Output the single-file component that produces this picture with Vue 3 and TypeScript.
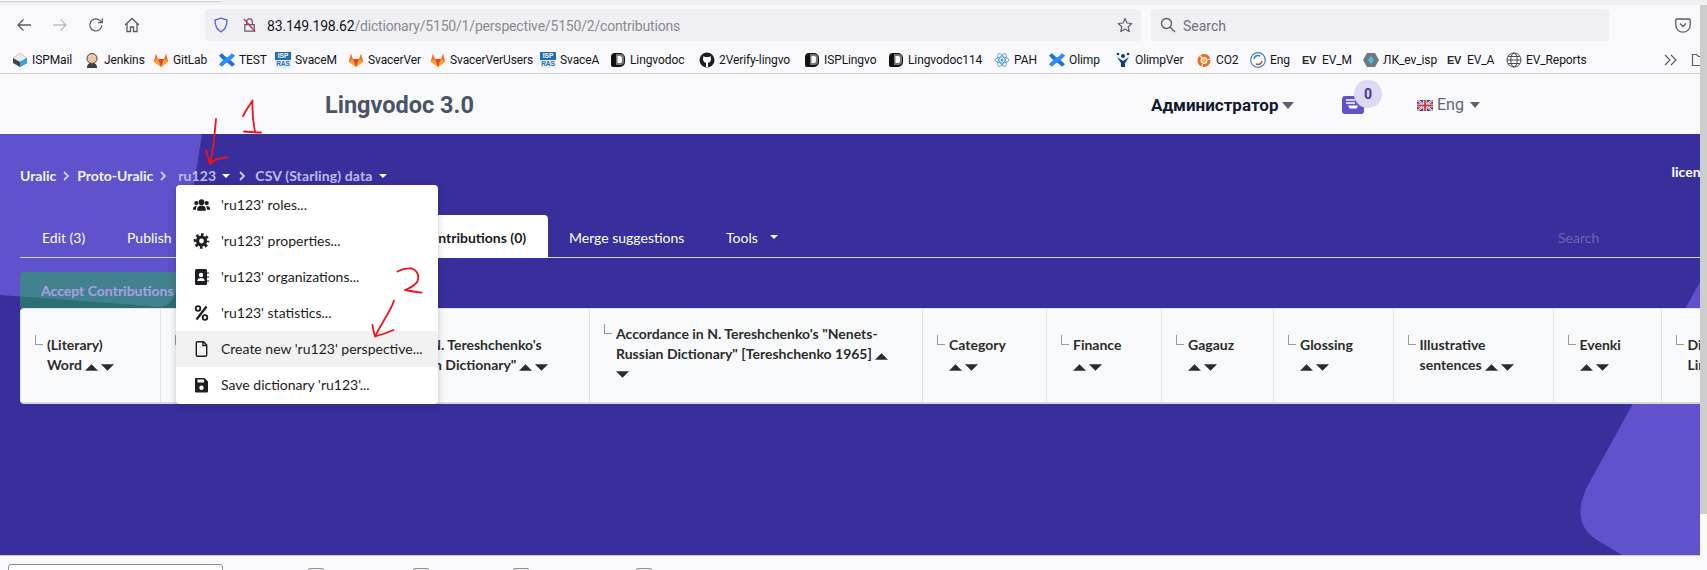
<script setup lang="ts">
type Mark = { label: string; kind: string; start: number }
const rawMarks: Mark[] = [
  { label: 'ISPMail', kind: 'mail', start: 12 },
  { label: 'Jenkins', kind: 'jenkins', start: 84 },
  { label: 'GitLab', kind: 'gitlab', start: 153 },
  { label: 'TEST', kind: 'conf', start: 219 },
  { label: 'SvaceM', kind: 'isp', start: 275 },
  { label: 'SvacerVer', kind: 'gitlab', start: 348 },
  { label: 'SvacerVerUsers', kind: 'gitlab', start: 430 },
  { label: 'SvaceA', kind: 'isp', start: 540 },
  { label: 'Lingvodoc', kind: 'd', start: 610 },
  { label: '2Verify-lingvo', kind: 'gh', start: 699 },
  { label: 'ISPLingvo', kind: 'd', start: 804 },
  { label: 'Lingvodoc114', kind: 'd', start: 888 },
  { label: 'РАН', kind: 'atom', start: 994 },
  { label: 'Olimp', kind: 'conf', start: 1049 },
  { label: 'OlimpVer', kind: 'person', start: 1115 },
  { label: 'CO2', kind: 'grafana', start: 1196 },
  { label: 'Eng', kind: 'eng', start: 1250 },
  { label: 'EV_M', kind: 'ev', start: 1302 },
  { label: 'ЛК_ev_isp', kind: 'lk', start: 1363 },
  { label: 'EV_A', kind: 'ev', start: 1447 },
  { label: 'EV_Reports', kind: 'globe', start: 1506 },
  { label: '', kind: 'chev', start: 1663 },
  { label: '', kind: 'folder', start: 1691 },
]
const marks = rawMarks.map((m, i) => ({
  ...m,
  width: (i + 1 < rawMarks.length ? rawMarks[i + 1].start : 1700) - m.start,
}))

type Col = { w: number; text: string; block?: boolean; tall?: boolean; split?: boolean; bare?: boolean }
const cols: Col[] = [
  { w: 140, text: '(Literary)\nWord' },
  { w: 152, text: '', bare: true },
  { w: 277, text: 'Accordance in N. Tereshchenko\'s\n"Nenets-Russian Dictionary"' },
  { w: 333, text: 'Accordance in N. Tereshchenko\'s "Nenets-\nRussian Dictionary" [Tereshchenko 1965]', tall: true, split: true },
  { w: 124, text: 'Category', block: true },
  { w: 115, text: 'Finance', block: true },
  { w: 112, text: 'Gagauz', block: true },
  { w: 119.5, text: 'Glossing', block: true },
  { w: 160, text: 'Illustrative\nsentences' },
  { w: 108, text: 'Evenki', block: true },
  { w: 120, text: 'Dictionary\nLinks' },
]

const menu = [
  { icon: 'users', text: "'ru123' roles..." },
  { icon: 'cog', text: "'ru123' properties..." },
  { icon: 'book', text: "'ru123' organizations..." },
  { icon: 'percent', text: "'ru123' statistics..." },
  { icon: 'file', text: "Create new 'ru123' perspective...", hot: true },
  { icon: 'save', text: "Save dictionary 'ru123'..." },
]
</script>

<template>
  <div class="screen">
    <div class="tabstrip"><div class="tabsliver"></div></div>
    <div class="shell">
      <div class="page">
        <div class="toolbar">
          <div class="nav">
            <svg viewBox="0 0 16 16" class="i16"><path d="M15 8H2M7.500 2.500 2 8l5.500 5.500" fill="none" stroke="#5b5b66" stroke-width="1.300"/></svg>
          </div>
          <div class="nav">
            <svg viewBox="0 0 16 16" class="i16"><path d="M1 8h13M8.500 2.500 14 8l-5.500 5.500" fill="none" stroke="#bcbcc3" stroke-width="1.300"/></svg>
          </div>
          <div class="nav">
            <svg viewBox="0 0 16 16" class="i16"><path d="M13.800 8.500A6 6 0 1 1 12 3.600L14 5.500M14.300 1.500v4.200h-4.200" fill="none" stroke="#5b5b66" stroke-width="1.300"/></svg>
          </div>
          <div class="nav">
            <svg viewBox="0 0 16 16" class="i16"><path d="M1 8 8 1.500 15 8M3 6.500V14.500h3.500V10h3v4.500H13V6.500" fill="none" stroke="#5b5b66" stroke-width="1.300"/></svg>
          </div>
          <div class="urlbar">
            <svg viewBox="0 0 16 16" class="i16"><path d="M8 1.200 14 3c0 6-1.500 9.500-6 11.800C3.500 12.500 2 9 2 3Z" fill="none" stroke="#5f63e6" stroke-width="1.400"/></svg>
            <svg viewBox="0 0 16 16" class="lock"><path d="M3 7.500h10v7H3ZM5 7.500V4.500a3 3 0 0 1 6 0v3" fill="none" stroke="#5b5b66" stroke-width="1.300"/><path d="M2 1.500 14 15" stroke="#e22850" stroke-width="1.500"/></svg>
            <span class="url"><span class="host">83.149.198.62</span>/dictionary/5150/1/perspective/5150/2/contributions</span>
            <svg viewBox="0 0 16 16" class="i16 star"><path d="M8 1.500 10 6l4.800.5-3.600 3.200 1 4.800L8 12l-4.200 2.500 1-4.800L1.200 6.500 6 6Z" fill="none" stroke="#5b5b66" stroke-width="1.200" stroke-linejoin="round"/></svg>
          </div>
          <div class="searchbar">
            <svg viewBox="0 0 16 16" class="i16"><circle cx="6.500" cy="6.500" r="5" fill="none" stroke="#5b5b66" stroke-width="1.300"/><path d="m10.300 10.300 4.700 4.700" stroke="#5b5b66" stroke-width="1.300"/></svg>
            <span>Search</span>
          </div>
          <svg viewBox="0 0 16 16" class="i16 pocket"><path d="M2 2h12a1.200 1.200 0 0 1 1.200 1.200V8A7.200 7.200 0 0 1 .8 8V3.200A1.200 1.200 0 0 1 2 2Z" fill="none" stroke="#5b5b66" stroke-width="1.300"/><path d="M5 6.500 8 9.500l3-3" fill="none" stroke="#5b5b66" stroke-width="1.300"/></svg>
        </div>

        <div class="bookmarks">
          <div v-for="m in marks" :key="m.start" class="mark" :style="{ width: m.width + 'px' }">
            <svg v-if="m.kind === 'mail'" viewBox="0 0 16 16" class="mi"><path d="M8 1 15 6v5l-7 4-7-4V6Z" fill="#3d4650"/><path d="M8 1 15 6 8 10 1 6Z" fill="#e8eaec"/><path d="M15 6v5l-7 4v-5Z" fill="#3aa3e0"/></svg>
            <svg v-else-if="m.kind === 'jenkins'" viewBox="0 0 16 16" class="mi"><circle cx="8" cy="6.500" r="5" fill="#eec9a8" stroke="#4b3b33"/><path d="M3 16c0-4 2-5 5-5s5 1 5 5Z" fill="#3a3f4a"/><path d="M7 11h2l-1 3Z" fill="#c8262c"/></svg>
            <svg v-else-if="m.kind === 'gitlab'" viewBox="0 0 16 16" class="mi"><path d="M8 15 .8 9.500 3 1.500 5 7h6l2-5.500 2.200 8Z" fill="#fc6d26"/><path d="M8 15 5 7h6Z" fill="#e24329"/><path d="M.8 9.500 5 7l3 8ZM15.200 9.500 11 7l-3 8Z" fill="#fca326"/></svg>
            <svg v-else-if="m.kind === 'conf'" viewBox="0 0 16 16" class="mi"><path d="M1.500 2.500C5.500 8 10 8 14.500 13.500" fill="none" stroke="#1c6fe6" stroke-width="4"/><path d="M14.500 2.500C10.500 8 5.500 8 1.500 13.500" fill="none" stroke="#2b8bff" stroke-width="4"/></svg>
            <span v-else-if="m.kind === 'isp'" class="isp"><span class="isp-a">ISP</span><span class="isp-b">RAS</span></span>
            <svg v-else-if="m.kind === 'd'" viewBox="0 0 16 16" class="mi"><path d="M5 1h5a5 5 0 0 1 5 5v4a5 5 0 0 1-5 5H3a2 2 0 0 1-2-2V5a4 4 0 0 1 4-4Z" fill="#111"/><path d="M6 2h4.500A3.500 3.500 0 0 1 14 5.500v4a3.500 3.500 0 0 1-3.500 3.500H6Z" fill="#777"/><path d="M7.500 4h2.500a2 2 0 0 1 2 2v3a2 2 0 0 1-2 2H7.500Z" fill="#fff"/></svg>
            <svg v-else-if="m.kind === 'gh'" viewBox="0 0 16 16" class="mi"><circle cx="8" cy="8" r="7.500" fill="#1b1f23"/><path d="M4.500 4 6 5h4l1.500-1 .5 3c0 2.500-1.500 3.500-3 3.700V15H7v-4.300C5.500 10.500 4 9.500 4 7Z" fill="#fff"/></svg>
            <svg v-else-if="m.kind === 'atom'" viewBox="0 0 16 16" class="mi"><g fill="none" stroke="#4c9ad6" stroke-width=".9"><ellipse cx="8" cy="8" rx="7" ry="3"/><ellipse cx="8" cy="8" rx="7" ry="3" transform="rotate(60 8 8)"/><ellipse cx="8" cy="8" rx="7" ry="3" transform="rotate(120 8 8)"/></g><circle cx="8" cy="8" r="1.500" fill="#4c9ad6"/></svg>
            <svg v-else-if="m.kind === 'person'" viewBox="0 0 16 16" class="mi"><circle cx="8" cy="4" r="2" fill="#0b3f75"/><circle cx="3" cy="2" r="1.300" fill="#0b3f75"/><circle cx="13" cy="2" r="1.300" fill="#0b3f75"/><path d="M2 5 8 9l6-4-4 6v4H6v-4Z" fill="#0b3f75"/></svg>
            <svg v-else-if="m.kind === 'grafana'" viewBox="0 0 16 16" class="mi"><circle cx="8" cy="8.500" r="5" fill="none" stroke="#f26a2a" stroke-width="3" stroke-dasharray="9 1"/><circle cx="8" cy="8.500" r="2.200" fill="#fbb43c"/></svg>
            <svg v-else-if="m.kind === 'eng'" viewBox="0 0 16 16" class="mi"><circle cx="8" cy="8" r="7.300" fill="#fff" stroke="#2d86c9" stroke-width="1.200"/><path d="M4 7c.5-3 3-4 6-3" fill="none" stroke="#2d86c9" stroke-width="1.500"/><path d="M12 9c-.5 3-3 4-6 3" fill="none" stroke="#d8362f" stroke-width="1.500"/></svg>
            <span v-else-if="m.kind === 'ev'" class="ev">EV</span>
            <svg v-else-if="m.kind === 'lk'" viewBox="0 0 16 16" class="mi"><path d="M4 1h8l4 7-4 7H4L0 8Z" fill="#6e7a80"/><path d="M8 4l3 4-3 4-3-4Z" fill="#48c0e8"/></svg>
            <svg v-else-if="m.kind === 'globe'" viewBox="0 0 16 16" class="mi"><g fill="none" stroke="#4a4a52" stroke-width="1"><circle cx="8" cy="8" r="7"/><ellipse cx="8" cy="8" rx="3.200" ry="7"/><path d="M1 8h14M2 4.500h12M2 11.500h12"/></g></svg>
            <svg v-else-if="m.kind === 'chev'" viewBox="0 0 16 16" class="mi"><path d="M2 3l5 5-5 5M8 3l5 5-5 5" fill="none" stroke="#5b5b66" stroke-width="1.200"/></svg>
            <svg v-else viewBox="0 0 16 16" class="mi"><path d="M1.500 13.500v-11h4l2 2h7v9Z" fill="none" stroke="#5b5b66" stroke-width="1.200"/></svg>
            <span v-if="m.label" class="mark-label">{{ m.label }}</span>
          </div>
        </div>

        <header class="appbar">
          <div class="brand">Lingvodoc 3.0</div>
          <div class="user">Администратор<i class="drop-dark"></i></div>
          <div class="inbox">
            <svg viewBox="0 0 22 19" class="inbox-icon"><path d="M3 1h16a3 3 0 0 1 3 3v12a3 3 0 0 1-3 3H3a3 3 0 0 1-3-3V4a3 3 0 0 1 3-3Z" fill="#5f52cc"/><path d="M4 5h9M4 8h9" stroke="#fff" stroke-width="1.500"/><path d="M6 10.500h10l-1.500 3h-7Z" fill="#fff"/></svg>
            <span class="badge">0</span>
          </div>
          <div class="lang">
            <svg viewBox="0 0 16 11" class="flag"><rect width="16" height="11" fill="#2a3f8f"/><path d="M0 0l16 11M16 0 0 11" stroke="#fff" stroke-width="2.200"/><path d="M0 0l16 11M16 0 0 11" stroke="#d0343c" stroke-width=".8"/><path d="M8 0v11M0 5.500h16" stroke="#fff" stroke-width="3.400"/><path d="M8 0v11M0 5.500h16" stroke="#d0343c" stroke-width="1.800"/></svg>
            <span>Eng</span><i class="drop-gray"></i>
          </div>
        </header>

        <section class="stage">
          <svg class="backdrop" viewBox="0 0 1700 421" preserveAspectRatio="none">
            <path d="M0 0H202L178 151Q173 178 150 172L0 161Z" fill="#5f52cc"/>
            <path d="M1700 148V421H1622L1597 406Q1570 389 1587 353Z" fill="#5f52cc"/>
          </svg>
          <div class="crumbs">
            <div class="crumb-list">
              <span class="crumb">Uralic</span>
              <svg viewBox="0 0 6 10" class="sep s1"><path d="m1 1 4 4-4 4" fill="none" stroke="#cfcbf0" stroke-width="1.800"/></svg>
              <span class="crumb">Proto-Uralic</span>
              <svg viewBox="0 0 6 10" class="sep s2"><path d="m1 1 4 4-4 4" fill="none" stroke="#cfcbf0" stroke-width="1.800"/></svg>
              <span class="crumb dim">ru123</span><i class="caret c1"></i>
              <svg viewBox="0 0 6 10" class="sep s3"><path d="m1 1 4 4-4 4" fill="none" stroke="#cfcbf0" stroke-width="1.800"/></svg>
              <span class="crumb dim">CSV (Starling) data</span><i class="caret c2"></i>
            </div>
            <span class="license">license</span>
          </div>

          <nav class="tabs">
            <a class="tab t-edit">Edit (3)</a>
            <a class="tab t-pub">Publish</a>
            <a class="tab active">Contributions (0)</a>
            <a class="tab t-merge">Merge suggestions</a>
            <a class="tab t-tools">Tools<i class="caret c3"></i></a>
            <span class="tab-search">Search</span>
          </nav>

          <button class="accept" type="button">Accept Contributions</button>

          <div class="table">
            <div v-for="(c, i) in cols" :key="i" class="cell" :class="{ tall: c.tall }" :style="{ width: c.w + 'px' }">
              <span class="corner"></span>
              <div v-if="!c.bare" class="label"><span class="label-text">{{ c.text }}</span><template v-if="c.block"><span class="sort block"><svg viewBox="0 0 13 7" class="tri"><path d="M6.500 .5 12.500 6.500H.5Z" /></svg><svg viewBox="0 0 13 7" class="tri"><path d="M.5 .5h12L6.500 6.500Z" /></svg></span></template><template v-else><svg viewBox="0 0 13 7" class="tri inline"><path d="M6.500 .5 12.500 6.500H.5Z" /></svg><svg viewBox="0 0 13 7" class="tri" :class="c.split ? 'dropline' : 'inline'"><path d="M.5 .5h12L6.500 6.500Z" /></svg></template></div>
            </div>
          </div>

          <div class="menu">
            <div v-for="item in menu" :key="item.icon" class="menu-item" :class="{ hot: item.hot }">
              <svg v-if="item.icon === 'users'" viewBox="0 0 18 14" class="mic"><circle cx="9" cy="4" r="3"/><circle cx="3.500" cy="5" r="2.200"/><circle cx="14.500" cy="5" r="2.200"/><path d="M4.500 13v-2c0-2 2-3.500 4.500-3.500s4.500 1.500 4.500 3.500v2ZM0 12v-1.500C0 9 1.500 8 3.500 8l.5.100C3.400 9 3.200 10 3.200 12ZM18 12v-1.500C18 9 16.500 8 14.500 8l-.5.100c.6.900.8 1.900.8 3.900Z"/></svg>
              <svg v-else-if="item.icon === 'cog'" viewBox="0 0 16 16" class="mic"><circle cx="8" cy="8" r="6.400" fill="none" stroke="#1d1d22" stroke-width="2.800" stroke-dasharray="2.600 2.430" stroke-dashoffset="1.300"/><circle cx="8" cy="8" r="4" fill="none" stroke="#1d1d22" stroke-width="3.200"/></svg>
              <svg v-else-if="item.icon === 'book'" viewBox="0 0 14 16" class="mic"><path d="M2 0h9a1.500 1.500 0 0 1 1.500 1.500v13A1.500 1.500 0 0 1 11 16H2a1.500 1.500 0 0 1-1.500-1.500v-13A1.500 1.500 0 0 1 2 0Z"/><path d="M13 3h1v2h-1ZM13 7h1v2h-1ZM13 11h1v2h-1Z"/><circle cx="6.500" cy="6" r="2.200" fill="#fff"/><path d="M2.800 12c0-2 1.500-3 3.700-3s3.700 1 3.700 3Z" fill="#fff"/></svg>
              <svg v-else-if="item.icon === 'percent'" viewBox="0 0 14 16" class="mic"><circle cx="3.500" cy="3.500" r="2.300" fill="none" stroke="#1d1d22" stroke-width="1.800"/><circle cx="10.500" cy="12.500" r="2.300" fill="none" stroke="#1d1d22" stroke-width="1.800"/><path d="M12 1.500 2 14.500" stroke="#1d1d22" stroke-width="2.200"/></svg>
              <svg v-else-if="item.icon === 'file'" viewBox="0 0 12 16" class="mic"><path d="M1.800.8H8L11.200 4v10a1.200 1.200 0 0 1-1.200 1.200H2A1.200 1.200 0 0 1 .8 14V2A1.200 1.200 0 0 1 1.800.8ZM7.500 1v3.500H11" fill="none" stroke="#1d1d22" stroke-width="1.400"/></svg>
              <svg v-else viewBox="0 0 14 16" class="mic"><path d="M1.500 1H10l3.500 3.500v10a1 1 0 0 1-1 1h-11a1 1 0 0 1-1-1v-12.500a1 1 0 0 1 1-1Z"/><rect x="3" y="2.500" width="6.500" height="3" fill="#fff"/><circle cx="7" cy="10.800" r="2.200" fill="#fff"/></svg>
              <span>{{ item.text }}</span>
            </div>
          </div>
        </section>

        <footer class="devbar">
          <span class="dev-input"></span>
          <span class="dev-check ch1"></span>
          <span class="dev-check ch2"></span>
          <span class="dev-check ch3"></span>
          <span class="dev-check ch4"></span>
        </footer>
      </div>
      <div class="scrolltrack"><div class="scrollthumb"></div></div>
    </div>

    <svg class="ink" viewBox="0 0 1707 570">
      <g fill="none" stroke="#f4101c" stroke-width="1.800" stroke-linecap="round" stroke-linejoin="round">
        <path d="M216 119C215 134 213 150 210.500 163.500M206 150 210 164C213 160 219 158 227 157.500"/>
        <path d="M243 116C246 110 250 105 252.500 100.500C252 112 253 122 255 131.500M244 131.500C250 132 256 132.500 261 132.500"/>
        <path d="M397.500 271.500C402 269 408 268 412 268.500C420 272 420 281 414 285C411 288 407 289 405 290C410 291 416 292 421.500 292.700"/>
        <path d="M394 300.500C391 310 386 316 383 322C380 327 377 332 375.500 336M372.500 325C373 329 374 333 375 336.500C381 335 387 333 393.500 330"/>
      </g>
    </svg>
  </div>
</template>

<style scoped>
.screen {
  position: relative;
  width: 1707px;
  height: 570px;
  overflow: hidden;
  background: #f9f9fb;
  font-family: Lato, "Noto Sans", sans-serif;
  font-size: 14px;
  line-height: 20px;
  color: #1d1d22;
}
.tabstrip { height: 5px; background: #f0f0f4; }
.tabsliver { width: 221px; height: 1px; background: #fff; box-shadow: 0 1px 1px #c8c8cc; }
.shell { display: flex; height: 565px; }
.page { width: 1700px; display: flex; flex-direction: column; }
.scrolltrack { width: 7px; background: #f9f9fb; }
.scrollthumb { height: 509px; background: #cdcdcd; }

.toolbar {
  display: flex;
  align-items: flex-start;
  height: 36px;
  padding-left: 6px;
  background: #f9f9fb;
  box-sizing: border-box;
}
.nav { width: 36px; height: 40px; display: flex; align-items: center; justify-content: center; }
.i16 { width: 16px; height: 16px; flex: none; }
.urlbar, .searchbar {
  margin-top: 4px;
  height: 32px;
  background: #f0f0f4;
  border-radius: 4px;
  display: flex;
  align-items: center;
  box-sizing: border-box;
  font-family: Roboto, sans-serif;
}
.urlbar { width: 936px; margin-left: 55px; padding: 0 8px; }
.lock { width: 15px; height: 16px; margin-left: 13px; flex: none; }
.url { margin-left: 10px; padding-top: 1px; font-size: 14px; color: #8a8a90; white-space: nowrap; letter-spacing: -0.18px; }
.host { color: #15141a; }
.star { margin-left: auto; }
.searchbar { width: 458px; margin-left: 10px; padding-left: 9px; color: #6f6f78; font-size: 14px; gap: 7px; }
.searchbar span { padding-top: 1px; }
.pocket { margin: 12px 0 0 66px; }

.bookmarks {
  display: flex;
  align-items: center;
  height: 26px;
  padding: 6px 0 0 12px;
  border-bottom: 1px solid #cfcfd2;
  box-sizing: content-box;
  background: #f9f9fb;
  overflow: hidden;
  font-family: Roboto, sans-serif;
  font-size: 12px;
  letter-spacing: -0.1px;
}
.mark { display: flex; align-items: center; gap: 4px; flex: none; white-space: nowrap; color: #15141a; }
.mi { width: 16px; height: 16px; flex: none; }
.isp { width: 16px; height: 16px; display: flex; flex-direction: column; flex: none; font: 700 6.500px/8px "Liberation Sans", sans-serif; text-align: center; letter-spacing: 0; }
.isp-a { background: #1f6fb2; color: #fff; }
.isp-b { color: #1f6fb2; background: #e6eef5; }
.ev { width: 16px; flex: none; font: 900 11px/16px "Liberation Sans", sans-serif; color: #2b2b2b; letter-spacing: -0.3px; }

.appbar {
  display: flex;
  align-items: center;
  height: 60px;
  padding-left: 325px;
  background: #fafafc;
  box-sizing: border-box;
  font-family: Roboto, sans-serif;
}
.brand { width: 826px; flex: none; font-size: 23.500px; font-weight: 700; color: #4a5468; margin-top: 2px; }
.user { width: 191px; flex: none; font-size: 17px; font-weight: 700; color: #10182e; display: flex; align-items: center; margin-top: 2px; }
.drop-dark { margin-left: 4px; border: 6px solid transparent; border-top: 7px solid #5d6373; border-bottom: 0; }
.inbox { position: relative; width: 75px; height: 20px; flex: none; margin-top: 2px; }
.inbox-icon { width: 22px; height: 19px; display: block; }
.badge {
  position: absolute;
  left: 12px;
  top: -15px;
  width: 28px;
  height: 28px;
  border-radius: 50%;
  background: #dcd9f0;
  color: #3f36a5;
  font-weight: 700;
  font-size: 14px;
  line-height: 28px;
  text-align: center;
}
.lang { display: flex; align-items: center; color: #5f6675; font-size: 16px; margin-top: 2px; }
.flag { width: 16px; height: 11px; margin-right: 4px; }
.drop-gray { margin-left: 6px; border: 5.500px solid transparent; border-top: 6px solid #5d6373; border-bottom: 0; }

.stage {
  position: relative;
  height: 421px;
  background: #382f9c;
  overflow: hidden;
  flex: none;
}
.backdrop { position: absolute; inset: 0; width: 1700px; height: 421px; }
.crumbs, .tabs, .accept, .table { position: relative; }
.crumbs { display: flex; padding: 32px 0 0 20px; height: 20px; font-weight: 700; }
.crumb-list { display: flex; align-items: center; width: 1651.500px; flex: none; height: 20px; }
.crumb { color: #f4f3fc; white-space: nowrap; }
.crumb.dim { color: #bfbbec; letter-spacing: 0.12px; }
.sep { width: 6px; height: 10px; flex: none; }
.s1 { margin: 0 8px 0 7px; }
.s2 { margin: 0 12px 0 7px; }
.s3 { margin: 0 10px 0 9px; }
.license { color: #fff; margin-top: -4px; height: 20px; white-space: nowrap; }
.caret { display: inline-block; border: 4px solid transparent; border-top: 4.500px solid #fff; border-bottom: 0; flex: none; }
.c1 { margin-left: 6px; }
.c2 { margin-left: 6px; }
.c3 { margin: 0 0 2px 12px; vertical-align: middle; }

.tabs {
  display: flex;
  align-items: stretch;
  height: 42px;
  margin: 29px 0 0 20px;
  border-bottom: 1px solid #d4d4e0;
  color: #fff;
}
.tab { display: flex; align-items: center; box-sizing: border-box; padding: 3px 0 0 22px; flex: none; white-space: nowrap; }
.t-edit { width: 85px; }
.t-pub { width: 285px; }
.tab.active {
  width: 158px;
  padding-left: 31px;
  background: #fff;
  color: #1d1d22;
  font-weight: 700;
  border-radius: 4px 4px 0 0;
  height: 43px;
}
.t-merge { width: 158px; padding-left: 21px; }
.t-tools { padding-left: 20px; width: 130px; }
.tab-search { margin-left: auto; width: 142px; line-height: 46px; color: #6c64ad; }

.accept {
  display: block;
  margin: 14px 0 0 20px;
  width: 180px;
  height: 36px;
  padding: 2px 0 0 21px;
  text-align: left;
  border: 0;
  border-radius: 4px 4px 0 0;
  background: #21ba45;
  color: #fff;
  font: 700 14px/34px Lato, sans-serif;
  opacity: 0.45;
}

.table {
  display: flex;
  margin-left: 20px;
  width: 1800px;
  height: 96px;
  box-sizing: border-box;
  background: #f9fafb;
  border-top: 1px solid #e2e2e6;
  border-left: 1px solid #e2e2e6;
  border-bottom: 2px solid #d8d8dc;
  border-radius: 4px 0 0 4px;
}
.cell {
  display: flex;
  align-items: flex-start;
  flex: none;
  box-sizing: border-box;
  padding: 26px 0 0 14px;
  border-right: 1px solid #e3e3e6;
  font-weight: 700;
  color: #2c2c2c;
}
.cell.tall { padding-top: 15px; }
.corner {
  width: 8px;
  height: 10px;
  flex: none;
  margin-right: 4px;
  border-left: 1px solid #9a9a9e;
  border-bottom: 1px solid #9a9a9e;
  box-sizing: border-box;
}
.label { white-space: nowrap; }
.label-text { white-space: pre-line; }
.sort.block { display: flex; gap: 3px; margin-top: 9px; }
.tri { width: 13px; height: 7px; flex: none; fill: #2c2c2c; stroke: #2c2c2c; stroke-width: 0.500px; stroke-linejoin: round; }
.tri.inline { margin-left: 3px; vertical-align: -1px; }
.tri.dropline { display: block; margin-top: 7px; }

.menu {
  position: absolute;
  left: 176px;
  top: 51px;
  width: 262px;
  height: 219px;
  padding: 2px 0 0;
  box-sizing: border-box;
  background: #fff;
  border-radius: 4px;
  box-shadow: 0 2px 4px rgba(34, 36, 38, 0.12), 0 2px 10px rgba(34, 36, 38, 0.15);
}
.menu-item { display: flex; align-items: center; height: 36px; padding-left: 17px; white-space: nowrap; color: #1d1d22; }
.menu-item.hot { background: #f2f2f2; }
.mic { width: 17px; height: 16px; margin-right: 11px; flex: none; fill: #1d1d22; }

.devbar {
  position: relative;
  flex: none;
  height: 15px;
  background: #f9f9fb;
  border-top: 1px solid #c9c9d0;
  box-sizing: border-box;
  overflow: hidden;
}
.dev-input { position: absolute; left: 8px; top: 8px; width: 215px; height: 20px; background: #fff; border: 1px solid #8f8f9d; border-radius: 3px; box-sizing: border-box; }
.dev-check { position: absolute; top: 12px; width: 16px; height: 16px; background: #f0f0f0; border: 1px solid #8f8f9d; border-radius: 2px; box-sizing: border-box; }
.ch1 { left: 308px; }
.ch2 { left: 413px; }
.ch3 { left: 513px; }
.ch4 { left: 636px; }

.ink { position: absolute; left: 0; top: 0; width: 1707px; height: 570px; pointer-events: none; }
</style>
